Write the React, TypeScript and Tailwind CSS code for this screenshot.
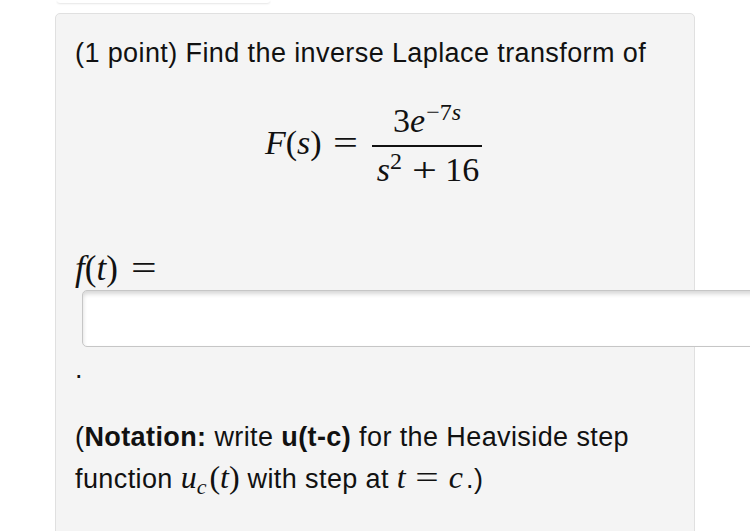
import React from "react";

const sans = "font-['Liberation_Sans',Arial,sans-serif]";
const serif = "font-['Liberation_Serif','Times_New_Roman',serif]";

// TeX's relation and binary signs are wider than Times' — stretch them a bit
function Op({ children, className = "" }: { children: React.ReactNode; className?: string }) {
  return <span className={`inline-block scale-x-[1.3] not-italic ${className}`}>{children}</span>;
}

function Formula() {
  return (
    <div className={`${serif} flex items-center ml-[190px] mt-[31px] text-[34px] text-[#111]`}>
      <span className="leading-[34px] mb-[5px]">
        <i>F</i>(<i>s</i>)
      </span>
      <span className="leading-[34px] mb-[5px] ml-[14px] mr-[17px]">
        <Op>=</Op>
      </span>
      <span className="inline-flex flex-col text-center">
        <span className="leading-[34px]">
          3<i>e</i>
          <sup className="text-[24px] ml-[1px]">
            −7<i>s</i>
          </sup>
        </span>
        <span className="h-[2px] w-full bg-[#111] mt-[7px]" />
        <span className="leading-[34px] mt-[6px] pl-[5px] pr-[3px]">
          <i>s</i>
          <sup className="text-[24px]">2</sup>
          <Op className="ml-[13px] mr-[11px]">+</Op>16
        </span>
      </span>
    </div>
  );
}

export default function App() {
  return (
    <div className={`${sans} w-[750px] h-[531px] overflow-hidden bg-white text-[#111]`}>
      <div className="ml-[57px] w-[213px] h-[3px] bg-white rounded-b-[4px] shadow-[0_1px_2px_rgba(0,0,0,0.1)]" />
      <div className="ml-[55px] mt-[10px] w-[640px] h-[600px] bg-[#f4f4f4] border border-[#e0e0e0] rounded-[5px] pl-[19px] pt-[19px]">
        <p className="text-[27px] leading-[40px] tracking-[0.4px]">
          (1 point) Find the inverse Laplace transform of
        </p>

        <Formula />

        <div className={`${serif} text-[35px] leading-[36px] mt-[64px]`}>
          <i>f</i>(<i>t</i>)
          <Op className="ml-[16px]">=</Op>
        </div>

        <div className="ml-[7px] mt-[3px] w-[700px] h-[57px] bg-white border border-[#c6c6c6] rounded-[5px] shadow-[inset_0_3px_4px_rgba(0,0,0,0.16)]" />

        <p className="text-[27px] leading-[40px] mt-[2px]">.</p>

        <p className="text-[27px] leading-[40px] tracking-[0.4px] mt-[28px]">
          (<b>Notation:</b> write <b>u(t-c)</b> for the Heaviside step
          <br />
          function{" "}
          <span className={`${serif} text-[32px] tracking-normal`}>
            <i>u</i>
            <sub className="italic text-[22px] mr-[3px]">c</sub>(<i>t</i>)
          </span>{" "}
          with step at{" "}
          <span className={`${serif} text-[32px] tracking-normal`}>
            <i>t</i>
            <Op className="ml-[12px] mr-[13px]">=</Op>
            <i>c</i>
          </span>
          <span className="ml-[3px]">.)</span>
        </p>
      </div>
    </div>
  );
}
